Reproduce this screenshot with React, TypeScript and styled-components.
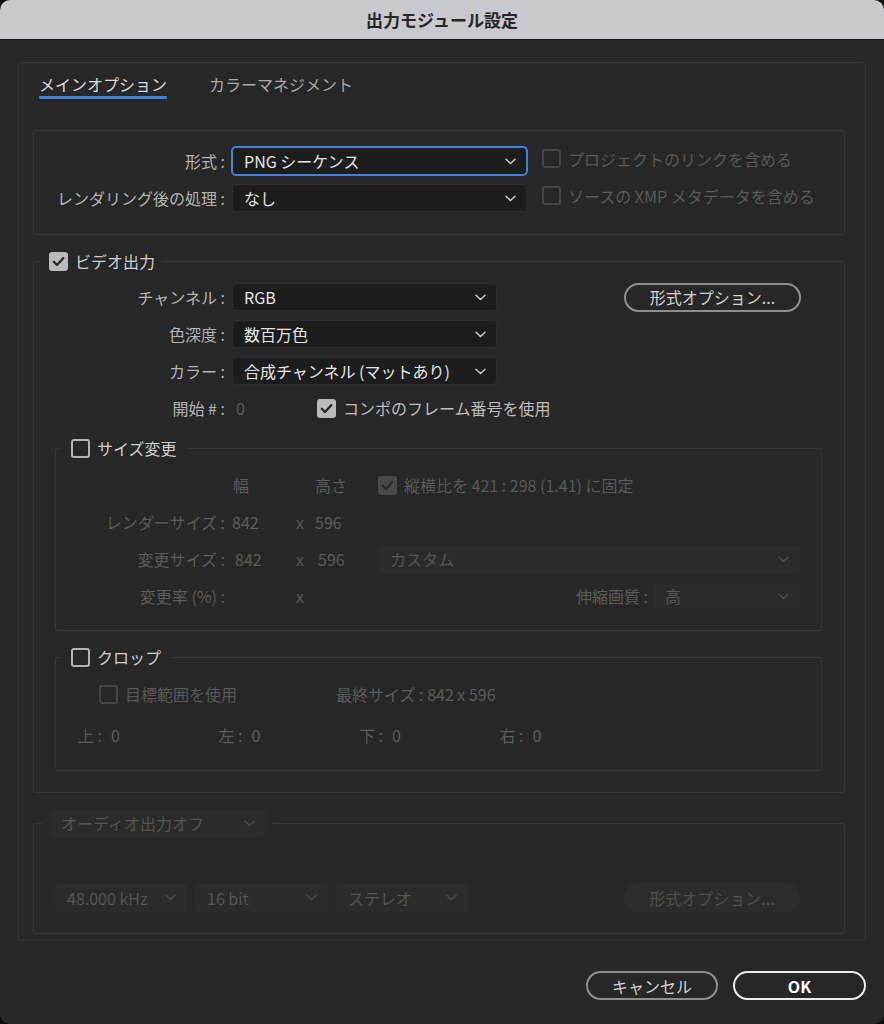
import React from "react";
import styled, { createGlobalStyle, css } from "styled-components";

const GlobalStyle = createGlobalStyle`
  html, body {
    margin: 0;
    padding: 0;
    background: #101010;
  }
  body {
    font-family: "Noto Sans CJK JP", "Noto Sans", sans-serif;
  }
`;

const Window = styled.div`
  width: 884px;
  height: 1024px;
  background: #272727;
  border-radius: 10px;
  overflow: hidden;
  display: flex;
  flex-direction: column;
`;

const TitleBar = styled.div`
  height: 39px;
  flex-shrink: 0;
  background: #c9c8cc;
  border-bottom: 1px solid #141414;
  display: flex;
  align-items: center;
  justify-content: center;
  font-size: 17px;
  font-weight: 700;
  color: #262626;
`;

const Body = styled.div`
  padding: 22px 18px 0;
  display: flex;
  flex-direction: column;
`;

const Panel = styled.div`
  border: 1px solid #353535;
  border-radius: 3px;
  padding: 0 20px 6px 14px;
`;

const Tabs = styled.div`
  display: flex;
  gap: 40px;
  padding-left: 5px;
`;

const Tab = styled.div<{ $active?: boolean }>`
  padding: 10px 1px 0;
  font-size: 16px;
  line-height: 22px;
  color: ${(p) => (p.$active ? "#dcdcdc" : "#a9a9a9")};

  &::after {
    content: "";
    display: block;
    height: 3px;
    margin-top: 1px;
    border-radius: 1px;
    background: ${(p) => (p.$active ? "#3f82d9" : "transparent")};
  }
`;

const FormatSection = styled.div`
  margin-top: 31px;
  border: 1px solid #353535;
  border-radius: 3px;
  padding: 16px 0 22px;
  display: grid;
  grid-template-columns: 191px 295px 1fr;
  column-gap: 7px;
  row-gap: 9px;
  align-items: center;
`;

const Label = styled.div<{ $dim?: boolean; $pad?: number }>`
  font-size: 16px;
  line-height: 28px;
  text-align: right;
  white-space: nowrap;
  padding-right: ${(p) => p.$pad ?? 0}px;
  color: ${(p) => (p.$dim ? "#5b5b5b" : "#b3b3b3")};
`;

const Value = styled.div<{ $pad?: number; $w?: number }>`
  font-size: 16px;
  line-height: 28px;
  color: #5b5b5b;
  white-space: nowrap;
  padding-left: ${(p) => p.$pad ?? 0}px;
  ${(p) => p.$w && css`width: ${p.$w}px; flex-shrink: 0;`}
`;

const SelectBox = styled.div<{ $w?: number; $focused?: boolean; $disabled?: boolean }>`
  box-sizing: border-box;
  width: ${(p) => (p.$w ? `${p.$w}px` : "100%")};
  height: 28px;
  flex-shrink: 0;
  display: flex;
  align-items: center;
  justify-content: space-between;
  padding: 0 10px 0 11px;
  border-radius: 4px;
  font-size: 16px;
  white-space: nowrap;
  background: ${(p) => (p.$disabled ? "#2b2b2b" : "#1d1d1d")};
  border: 1px solid ${(p) => (p.$focused ? "#3f82d9" : p.$disabled ? "#2b2b2b" : "#2d2d2d")};
  color: ${(p) => (p.$disabled ? "#545454" : "#e4e4e4")};
  ${(p) => p.$focused && css`box-shadow: 0 0 0 1px #3f82d9;`}
`;

const Chevron = ({ dim }: { dim?: boolean }) => (
  <svg width="11" height="7" viewBox="0 0 11 7">
    <path
      d="M1 1.2 L5.5 5.5 L10 1.2"
      fill="none"
      stroke={dim ? "#4a4a4a" : "#c9c9c9"}
      strokeWidth="1.5"
      strokeLinecap="round"
      strokeLinejoin="round"
    />
  </svg>
);

function Select({
  value,
  width,
  focused,
  disabled,
}: {
  value: string;
  width?: number;
  focused?: boolean;
  disabled?: boolean;
}) {
  return (
    <SelectBox $w={width} $focused={focused} $disabled={disabled}>
      <span>{value}</span>
      <Chevron dim={disabled} />
    </SelectBox>
  );
}

const Box = styled.span<{ $checked?: boolean; $disabled?: boolean }>`
  box-sizing: border-box;
  width: 19px;
  height: 19px;
  border-radius: 3px;
  flex-shrink: 0;
  display: inline-flex;
  align-items: center;
  justify-content: center;
  ${(p) =>
    p.$checked
      ? css`background: ${p.$disabled ? "#484848" : "#b9b9b9"};`
      : css`border: 2px solid ${p.$disabled ? "#444444" : "#b4b4b4"};`}
`;

const CheckText = styled.span<{ $disabled?: boolean; $bright?: boolean }>`
  display: inline-flex;
  align-items: center;
  gap: 7px;
  font-size: 16px;
  line-height: 20px;
  white-space: nowrap;
  color: ${(p) => (p.$disabled ? "#585858" : p.$bright ? "#cfcfcf" : "#bdbdbd")};
`;

function Checkbox({
  label,
  checked,
  disabled,
  bright,
}: {
  label: string;
  checked?: boolean;
  disabled?: boolean;
  bright?: boolean;
}) {
  return (
    <CheckText $disabled={disabled} $bright={bright}>
      <Box $checked={checked} $disabled={disabled}>
        {checked && (
          <svg width="19" height="19" viewBox="0 0 19 19">
            <path
              d="M4.8 9.8 L8 13 L14.2 6.2"
              fill="none"
              stroke={disabled ? "#2a2a2a" : "#262626"}
              strokeWidth="2.3"
              strokeLinecap="round"
              strokeLinejoin="round"
            />
          </svg>
        )}
      </Box>
      {label}
    </CheckText>
  );
}

const Group = styled.fieldset<{ $inset?: boolean }>`
  margin: ${(p) => (p.$inset ? "16px 22px 0 21px" : "16px 0 0")};
  padding: 0;
  border: 1px solid #353535;
  border-radius: 3px;
  min-width: 0;
`;

const Legend = styled.legend<{ $gap?: number }>`
  padding: 0 ${(p) => p.$gap ?? 7}px;
  margin-left: ${(p) => (p.$gap ? 5 : 8)}px;
`;

const LegendInner = styled.div`
  display: flex;
  align-items: center;
`;

const VideoGrid = styled.div`
  padding: 12px 43px 0 0;
  display: grid;
  grid-template-columns: 191px 265px 1fr;
  grid-auto-rows: 28px;
  column-gap: 7px;
  row-gap: 9px;
  align-items: center;
`;

const StartCell = styled.div`
  display: flex;
  align-items: center;
  grid-column: 2 / 4;
`;

const PillButton = styled.button<{ $w: number; $variant?: "primary" | "disabled" }>`
  box-sizing: border-box;
  width: ${(p) => p.$w}px;
  height: 29px;
  border-radius: 15px;
  font-family: inherit;
  font-size: 16px;
  line-height: 1;
  padding: 0;
  background: transparent;
  border: 2px solid #8f8f8f;
  color: #d2d2d2;
  justify-self: end;
  ${(p) =>
    p.$variant === "primary" &&
    css`
      border-color: #ececec;
      color: #ffffff;
      font-weight: 700;
    `}
  ${(p) =>
    p.$variant === "disabled" &&
    css`
      border-color: #2c2c2c;
      background: #2c2c2c;
      color: #4e4e4e;
    `}
`;

const SizeGrid = styled.div`
  padding: 13px 21px 20px 0;
  display: grid;
  grid-template-columns: 176px 64px 19px 63px 1fr;
  grid-auto-rows: 28px;
  row-gap: 9px;
  align-items: center;
`;

const QualityCell = styled.div`
  display: flex;
  align-items: center;
  justify-content: flex-end;
  gap: 5px;
`;

const CropBody = styled.div`
  padding: 13px 0 21px;
  display: flex;
  flex-direction: column;
  gap: 13px;
`;

const CropRow = styled.div<{ $indent: number }>`
  height: 28px;
  display: flex;
  align-items: center;
  padding-left: ${(p) => p.$indent}px;
`;

const CropItem = styled.div<{ $w: number }>`
  width: ${(p) => p.$w}px;
  flex-shrink: 0;
  display: flex;
  align-items: center;
`;

const DimText = styled.span<{ $gap?: number }>`
  font-size: 16px;
  line-height: 28px;
  color: #5b5b5b;
  white-space: nowrap;
  margin-left: ${(p) => p.$gap ?? 0}px;
`;

const AudioRow = styled.div`
  padding: 46px 44px 21px 21px;
  display: flex;
  align-items: center;
  gap: 8px;
`;

const Spacer = styled.div`
  flex: 1;
`;

const Footer = styled.div`
  margin-top: 30px;
  display: flex;
  justify-content: flex-end;
  gap: 15px;
`;

export default function App() {
  return (
    <>
      <GlobalStyle />
      <Window>
        <TitleBar>出力モジュール設定</TitleBar>
        <Body>
          <Panel>
            <Tabs>
              <Tab $active>メインオプション</Tab>
              <Tab>カラーマネジメント</Tab>
            </Tabs>

            <FormatSection>
              <Label>形式 :</Label>
              <Select value="PNG シーケンス" focused />
              <Value $pad={8}>
                <Checkbox label="プロジェクトのリンクを含める" disabled />
              </Value>
              <Label>レンダリング後の処理 :</Label>
              <Select value="なし" />
              <Value $pad={8}>
                <Checkbox label="ソースの XMP メタデータを含める" disabled />
              </Value>
            </FormatSection>

            <Group>
              <Legend>
                <LegendInner>
                  <Checkbox label="ビデオ出力" checked bright />
                </LegendInner>
              </Legend>
              <VideoGrid>
                <Label>チャンネル :</Label>
                <Select value="RGB" />
                <PillButton $w={177}>形式オプション...</PillButton>
                <Label>色深度 :</Label>
                <Select value="数百万色" />
                <div />
                <Label>カラー :</Label>
                <Select value="合成チャンネル (マットあり)" />
                <div />
                <Label>開始 # :</Label>
                <StartCell>
                  <Value $pad={4} $w={81}>
                    0
                  </Value>
                  <Checkbox label="コンポのフレーム番号を使用" checked />
                </StartCell>
              </VideoGrid>

              <Group $inset>
                <Legend $gap={10}>
                  <LegendInner>
                    <Checkbox label="サイズ変更" bright />
                  </LegendInner>
                </Legend>
                <SizeGrid>
                  <div />
                  <Value $pad={1}>幅</Value>
                  <div />
                  <Value>高さ</Value>
                  <Checkbox label="縦横比を 421 : 298 (1.41) に固定" checked disabled />

                  <Label $dim $pad={7}>
                    レンダーサイズ :
                  </Label>
                  <Value>842</Value>
                  <Value>x</Value>
                  <Value>596</Value>
                  <div />

                  <Label $dim $pad={7}>
                    変更サイズ :
                  </Label>
                  <Value $pad={3}>842</Value>
                  <Value>x</Value>
                  <Value $pad={3}>596</Value>
                  <Select value="カスタム" disabled />

                  <Label $dim $pad={7}>
                    変更率 (%) :
                  </Label>
                  <div />
                  <Value>x</Value>
                  <div />
                  <QualityCell>
                    <Label $dim>伸縮画質 :</Label>
                    <Select value="高" width={147} disabled />
                  </QualityCell>
                </SizeGrid>
              </Group>

              <Group $inset style={{ marginBottom: 21 }}>
                <Legend $gap={10}>
                  <LegendInner>
                    <Checkbox label="クロップ" bright />
                  </LegendInner>
                </Legend>
                <CropBody>
                  <CropRow $indent={43}>
                    <CropItem $w={237}>
                      <Checkbox label="目標範囲を使用" disabled />
                    </CropItem>
                    <DimText>最終サイズ : 842 x 596</DimText>
                  </CropRow>
                  <CropRow $indent={22}>
                    {["上", "左", "下", "右"].map((side) => (
                      <CropItem key={side} $w={140.5}>
                        <DimText>{side} :</DimText>
                        <DimText $gap={9}>0</DimText>
                      </CropItem>
                    ))}
                  </CropRow>
                </CropBody>
              </Group>
            </Group>

            <Group>
              <Legend>
                <Select value="オーディオ出力オフ" width={217} disabled />
              </Legend>
              <AudioRow>
                <Select value="48.000 kHz" width={132} disabled />
                <Select value="16 bit" width={133} disabled />
                <Select value="ステレオ" width={132} disabled />
                <Spacer />
                <PillButton $w={176} $variant="disabled">
                  形式オプション...
                </PillButton>
              </AudioRow>
            </Group>
          </Panel>

          <Footer>
            <PillButton $w={132}>キャンセル</PillButton>
            <PillButton $w={133} $variant="primary">
              OK
            </PillButton>
          </Footer>
        </Body>
      </Window>
    </>
  );
}
